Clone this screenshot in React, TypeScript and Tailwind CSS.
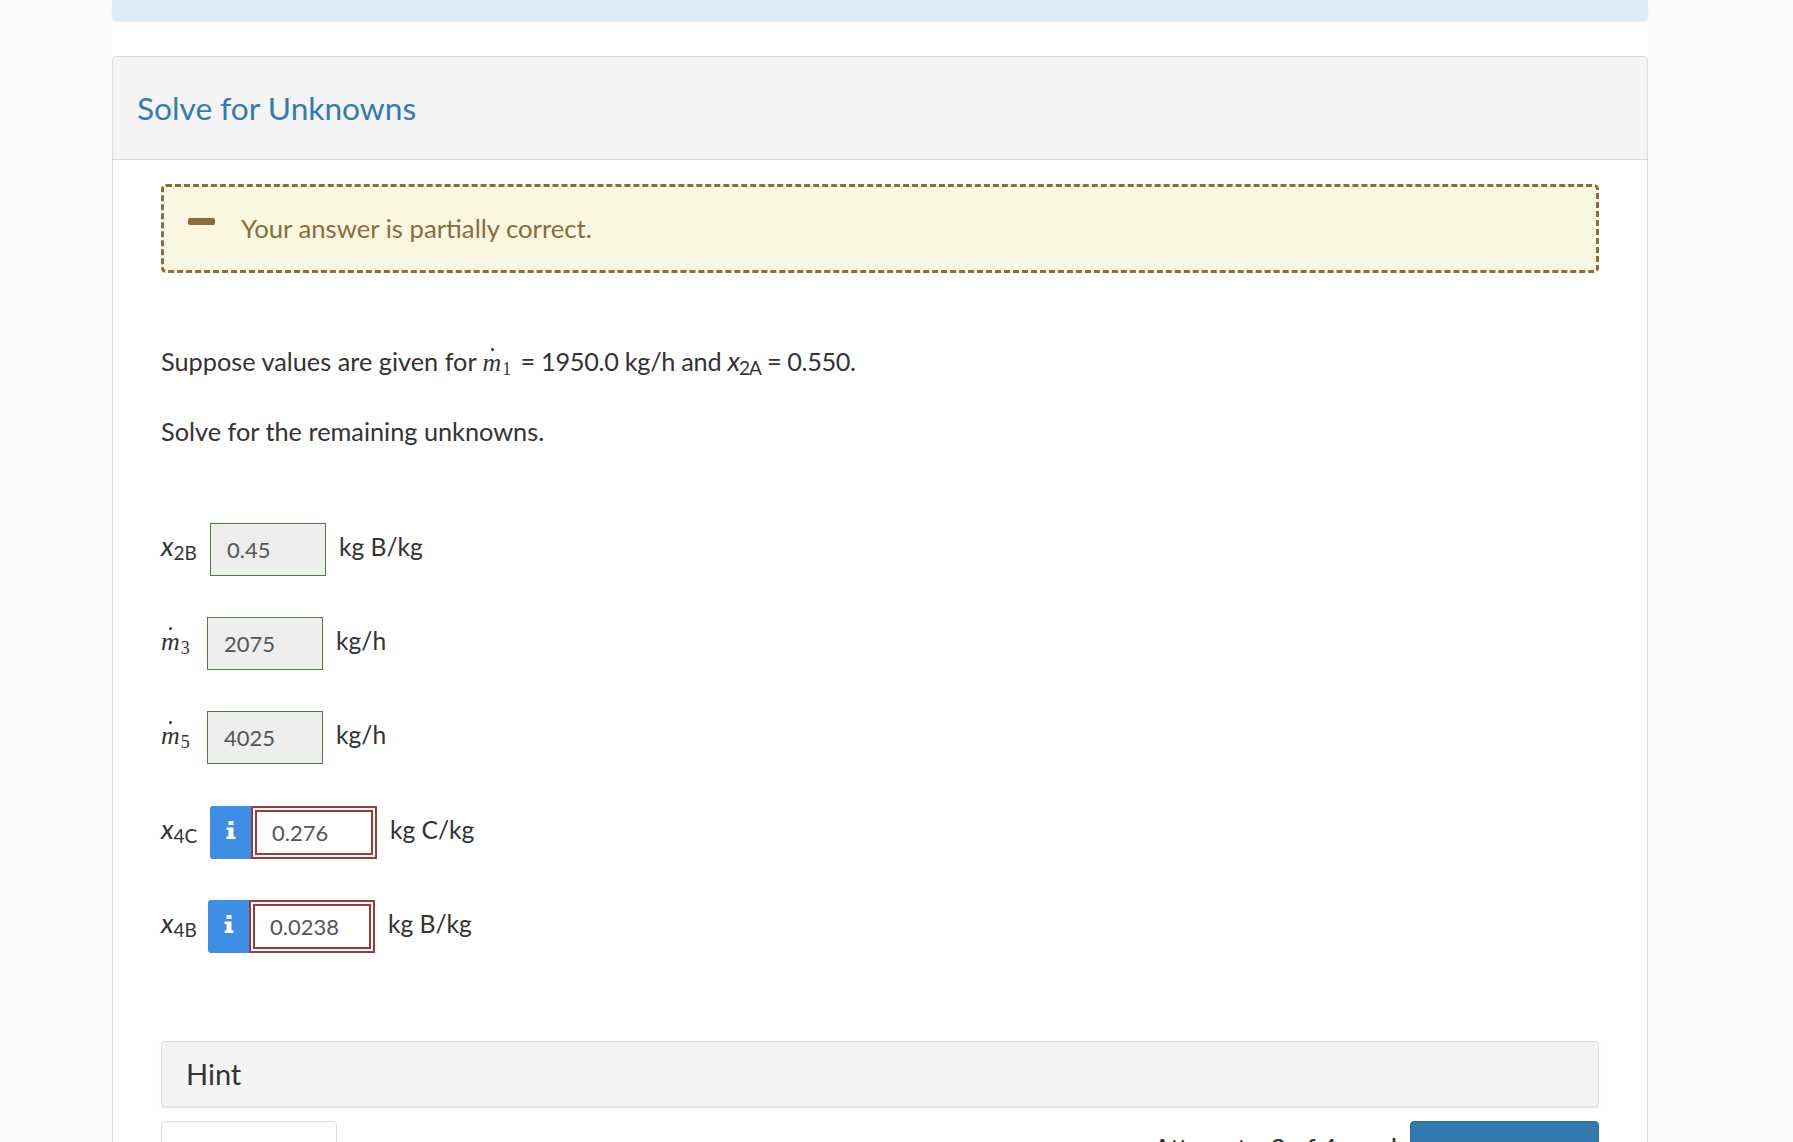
import type { ReactNode } from "react"

const lato = { fontFamily: "Lato, sans-serif" }

function Dotm({ sub }: { sub: string }) {
  return (
    <span className="font-['Liberation_Serif',serif] inline-block">
      <span className="relative italic text-[26px]">
        m
        <span className="absolute left-[8px] top-[0px] w-[3px] h-[3px] rounded-full bg-[#333]" />
      </span>
      <span className="text-[18px] ml-[1px] relative top-[4px]">{sub}</span>
    </span>
  )
}

function Xvar({ sub }: { sub: string }) {
  return (
    <span className="inline-block">
      <span className="italic text-[27px]">x</span>
      <span className="text-[19px] relative top-[4px]">{sub}</span>
    </span>
  )
}

// font-awesome style slab "i"
function InfoGlyph() {
  return (
    <svg width="10" height="18" viewBox="0 0 10 18" fill="#fff">
      <rect x="2.5" y="0" width="5" height="4" />
      <path d="M0.5 6.5h7v9h2v2.5h-9v-2.5h2v-6.5h-2z" />
    </svg>
  )
}

interface RowProps {
  label: ReactNode
  labelWidth: string
  labelTop: string
  value: string
  unit: string
  wrong?: boolean
}

function Row({ label, labelWidth, labelTop, value, unit, wrong }: RowProps) {
  return (
    <div className="flex items-start h-[53px]">
      <div className={`${labelWidth} ${labelTop} leading-[34px] whitespace-nowrap`}>{label}</div>
      {wrong ? (
        <>
          <div className="w-[41px] h-[53px] bg-[#3e8ee6] rounded-l-[3px] flex justify-center pt-[15px]">
            <InfoGlyph />
          </div>
          <div className="w-[126px] h-[53px] border-[2px] border-[#9c3b3b] p-[2px]">
            <div className="h-full border-[2px] border-[#9c3b3b] pl-[15px] flex items-center text-[#555] text-[22px]">
              {value}
            </div>
          </div>
        </>
      ) : (
        <div className="w-[116px] h-[53px] border border-[#4f7a47] bg-[#eeeeee] pl-[16px] flex items-center text-[#555] text-[22px]">
          {value}
        </div>
      )}
      <div className="ml-[13px] text-[24.6px] text-[#333] leading-[48px]">{unit}</div>
    </div>
  )
}

export default function App() {
  return (
    <div className="h-[1142px] overflow-hidden bg-[#fafafa] text-[#333]" style={lato}>
      <div className="w-[1536px] ml-[112px] bg-white h-full">
        <div className="h-[20px] bg-[#dcebf5] rounded-b-[4px] shadow-[0_2px_3px_-1px_rgba(0,0,0,0.15)]" />
        <div className="mt-[36px] border border-[#dddddd] rounded-t-[4px] h-[1100px]">
          <div className="h-[103px] bg-[#f4f4f4] border-b border-[#dddddd] flex items-center pl-[24px] pt-[1px] text-[#337ab7] text-[31.7px] rounded-t-[4px]">
            Solve for Unknowns
          </div>
          <div className="px-[48px] pt-[24px]">
            <div className="h-[89px] bg-[#faf7e0] border-[3px] border-dashed border-[#8a6d3b] rounded-[5px] flex text-[#8a6d3b]">
              <div className="w-[27px] h-[7px] bg-[#8a6d3b] rounded-[2px] ml-[24px] mt-[31px]" />
              <div className="ml-[26px] mt-[24px] text-[25.7px] leading-[34px]">Your answer is partially correct.</div>
            </div>
            <p className="mt-[69px] text-[25.3px] leading-[37px]">
              Suppose values are given for <Dotm sub="1" />
              <span className="ml-[3px] tracking-[-0.3px]"> = 1950.0 kg/h and </span>
              <span className="tracking-[-1px]"><Xvar sub="2A" /></span>
              <span className="tracking-[-0.4px]"> = 0.550.</span>
            </p>
            <p className="mt-[29px] text-[25.3px] leading-[37px]">Solve for the remaining unknowns.</p>
            <div className="mt-[73px] flex flex-col gap-[41px]">
              <Row label={<Xvar sub="2B" />} labelWidth="w-[49px]" labelTop="pt-[6px]" value="0.45" unit="kg B/kg" />
              <Row label={<Dotm sub="3" />} labelWidth="w-[46px]" labelTop="pt-[8px]" value="2075" unit="kg/h" />
              <Row label={<Dotm sub="5" />} labelWidth="w-[46px]" labelTop="pt-[8px]" value="4025" unit="kg/h" />
              <div className="mt-[1px]">
                <Row label={<Xvar sub="4C" />} labelWidth="w-[49px]" labelTop="pt-[6px]" value="0.276" unit="kg C/kg" wrong />
              </div>
              <Row label={<Xvar sub="4B" />} labelWidth="w-[47px]" labelTop="pt-[6px]" value="0.0238" unit="kg B/kg" wrong />
            </div>
            <div className="mt-[88px] h-[66px] bg-[#f4f4f4] border border-[#dddddd] rounded-[4px] shadow-[0_2px_3px_-1px_rgba(0,0,0,0.12)] flex items-center pl-[24px] text-[29px]">
              Hint
            </div>
            <div className="mt-[14px] flex items-start">
              <div className="w-[176px] h-[60px] border border-[#dddddd] rounded-[4px]" />
              <div className="ml-auto mr-[13px] text-[25.8px] leading-[40px] pt-[6px] font-medium whitespace-nowrap">Attempts: 2 of 4 used</div>
              <div className="w-[189px] h-[60px] bg-[#3279ad] rounded-[4px] border border-[#2e6da4]" />
            </div>
          </div>
        </div>
      </div>
    </div>
  )
}
